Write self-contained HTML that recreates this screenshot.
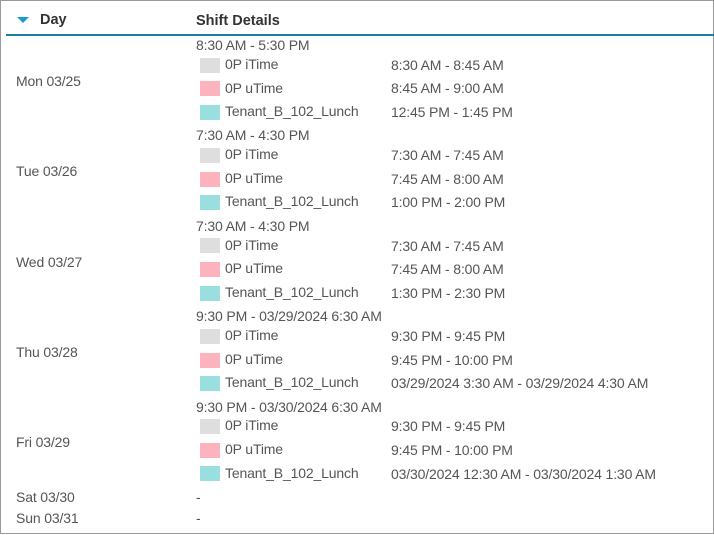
<!DOCTYPE html>
<html><head><meta charset="utf-8"><style>
body{margin:0;width:714px;height:535px;overflow:hidden;background:#fff;font-family:"Liberation Sans",sans-serif;}
#f{position:absolute;left:0;top:0;width:712px;height:532px;border:1px solid #9a9a9a;}
.t{position:absolute;font-size:14px;line-height:16px;color:#555;white-space:nowrap;letter-spacing:-0.15px;}
.h{position:absolute;font-size:14.5px;line-height:16px;color:#333;font-weight:bold;}
.s{position:absolute;width:20px;height:15px;left:200px;}
.g{background:#dedede}.p{background:#fdb3bd}.c{background:#9adfdf}
</style></head><body>
<div id="f"></div>
<div style="position:absolute;left:17px;top:17px;width:0;height:0;border-left:6px solid transparent;border-right:6px solid transparent;border-top:6px solid #1a9bd0"></div>
<div class="h" style="left:40px;top:12px">Day</div>
<div class="h" style="left:196px;top:13px">Shift Details</div>
<div style="position:absolute;left:6px;top:34px;width:708px;height:2px;background:#1c7f9e"></div>

<div class="t" style="left:196px;top:37px">8:30 AM - 5:30 PM</div>
<div class="t" style="left:16px;top:73px">Mon 03/25</div>
<div class="s g" style="top:58px"></div><div class="t" style="left:225px;top:56px">0P iTime</div><div class="t" style="left:391px;top:57px">8:30 AM - 8:45 AM</div>
<div class="s p" style="top:81px"></div><div class="t" style="left:225px;top:80px">0P uTime</div><div class="t" style="left:391px;top:80px">8:45 AM - 9:00 AM</div>
<div class="s c" style="top:105px"></div><div class="t" style="left:225px;top:103px">Tenant_B_102_Lunch</div><div class="t" style="left:391px;top:104px">12:45 PM - 1:45 PM</div>

<div class="t" style="left:196px;top:127px">7:30 AM - 4:30 PM</div>
<div class="t" style="left:16px;top:163px">Tue 03/26</div>
<div class="s g" style="top:148px"></div><div class="t" style="left:225px;top:146px">0P iTime</div><div class="t" style="left:391px;top:147px">7:30 AM - 7:45 AM</div>
<div class="s p" style="top:172px"></div><div class="t" style="left:225px;top:170px">0P uTime</div><div class="t" style="left:391px;top:171px">7:45 AM - 8:00 AM</div>
<div class="s c" style="top:195px"></div><div class="t" style="left:225px;top:193px">Tenant_B_102_Lunch</div><div class="t" style="left:391px;top:194px">1:00 PM - 2:00 PM</div>

<div class="t" style="left:196px;top:218px">7:30 AM - 4:30 PM</div>
<div class="t" style="left:16px;top:254px">Wed 03/27</div>
<div class="s g" style="top:238px"></div><div class="t" style="left:225px;top:237px">0P iTime</div><div class="t" style="left:391px;top:238px">7:30 AM - 7:45 AM</div>
<div class="s p" style="top:262px"></div><div class="t" style="left:225px;top:260px">0P uTime</div><div class="t" style="left:391px;top:261px">7:45 AM - 8:00 AM</div>
<div class="s c" style="top:286px"></div><div class="t" style="left:225px;top:284px">Tenant_B_102_Lunch</div><div class="t" style="left:391px;top:285px">1:30 PM - 2:30 PM</div>

<div class="t" style="left:196px;top:308px">9:30 PM - 03/29/2024 6:30 AM</div>
<div class="t" style="left:16px;top:344px">Thu 03/28</div>
<div class="s g" style="top:329px"></div><div class="t" style="left:225px;top:327px">0P iTime</div><div class="t" style="left:391px;top:328px">9:30 PM - 9:45 PM</div>
<div class="s p" style="top:353px"></div><div class="t" style="left:225px;top:351px">0P uTime</div><div class="t" style="left:391px;top:352px">9:45 PM - 10:00 PM</div>
<div class="s c" style="top:376px"></div><div class="t" style="left:225px;top:374px">Tenant_B_102_Lunch</div><div class="t" style="left:391px;top:375px">03/29/2024 3:30 AM - 03/29/2024 4:30 AM</div>

<div class="t" style="left:196px;top:399px">9:30 PM - 03/30/2024 6:30 AM</div>
<div class="t" style="left:16px;top:434px">Fri 03/29</div>
<div class="s g" style="top:419px"></div><div class="t" style="left:225px;top:417px">0P iTime</div><div class="t" style="left:391px;top:418px">9:30 PM - 9:45 PM</div>
<div class="s p" style="top:443px"></div><div class="t" style="left:225px;top:441px">0P uTime</div><div class="t" style="left:391px;top:442px">9:45 PM - 10:00 PM</div>
<div class="s c" style="top:466px"></div><div class="t" style="left:225px;top:465px">Tenant_B_102_Lunch</div><div class="t" style="left:391px;top:466px">03/30/2024 12:30 AM - 03/30/2024 1:30 AM</div>

<div class="t" style="left:16px;top:489px">Sat 03/30</div><div class="t" style="left:196px;top:489px">-</div>
<div class="t" style="left:16px;top:510px">Sun 03/31</div><div class="t" style="left:196px;top:510px">-</div>
</body></html>
